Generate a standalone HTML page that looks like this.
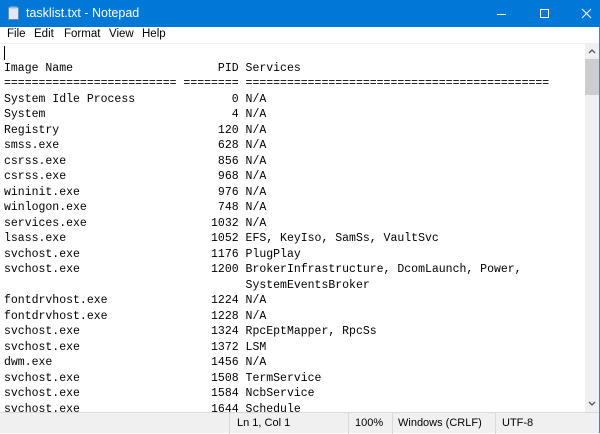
<!DOCTYPE html>
<html><head><style>
*{margin:0;padding:0;box-sizing:border-box}
body{width:600px;height:433px;overflow:hidden;background:#fff;font-family:"Liberation Sans",sans-serif;position:relative}
.title{position:absolute;left:0;top:0;width:600px;height:27px;background:#0078d7;color:#fff;font-size:12.5px}
.title span{position:absolute;left:26px;top:6px}
.menu{position:absolute;left:0;top:27px;width:600px;height:16px;font-size:11.5px;color:#000}
.menu span{position:absolute;top:1px}
.edit{position:absolute;left:0;top:43px;width:585px;height:369px;border-top:1px solid #f0f0f0;overflow:hidden}
pre{position:absolute;left:4px;top:1px;font-family:"Liberation Mono",monospace;font-size:11.5px;line-height:15.5px;color:#000}
.sb{position:absolute;left:585px;top:43px;width:14px;height:369px;background:#f0f0f0}
.thumb{position:absolute;left:0;top:16px;width:14px;height:36px;background:#cdcdcd}
.status{position:absolute;left:0;top:412px;width:600px;height:21px;background:#f0f0f0;border-top:1px solid #d9d9d9;font-size:11px;color:#000}
.status span{position:absolute;top:4px}
.sep{position:absolute;top:0;width:1px;height:21px;background:#d9d9d9}
.bl{position:absolute;left:599px;top:27px;width:1px;height:406px;background:#3b86d6}
</style></head><body>
<div class="title">
<svg style="position:absolute;left:7px;top:6px" width="14" height="15"><rect x="1.5" y="1.5" width="10" height="12" fill="#dfe9f3" stroke="#6a8cb0"/><rect x="3" y="0.5" width="7" height="2" fill="#9bb5d0"/></svg>
<span>tasklist.txt - Notepad</span>
<svg style="position:absolute;left:494px;top:8px" width="100" height="12" stroke="#fff" fill="none" stroke-width="1"><path d="M3 6.5h9"/><rect x="46.5" y="1.5" width="8" height="8"/><path d="M88 1l9 9M97 1l-9 9"/></svg>
</div>
<div class="menu"><span style="left:7px">File</span><span style="left:34px">Edit</span><span style="left:64px">Format</span><span style="left:109px">View</span><span style="left:142px">Help</span></div>
<div class="edit"><div style="position:absolute;left:4px;top:2px;width:1px;height:14px;background:#000"></div><pre>

Image Name                     PID Services
========================= ======== ============================================
System Idle Process              0 N/A
System                           4 N/A
Registry                       120 N/A
smss.exe                       628 N/A
csrss.exe                      856 N/A
csrss.exe                      968 N/A
wininit.exe                    976 N/A
winlogon.exe                   748 N/A
services.exe                  1032 N/A
lsass.exe                     1052 EFS, KeyIso, SamSs, VaultSvc
svchost.exe                   1176 PlugPlay
svchost.exe                   1200 BrokerInfrastructure, DcomLaunch, Power,
                                   SystemEventsBroker
fontdrvhost.exe               1224 N/A
fontdrvhost.exe               1228 N/A
svchost.exe                   1324 RpcEptMapper, RpcSs
svchost.exe                   1372 LSM
dwm.exe                       1456 N/A
svchost.exe                   1508 TermService
svchost.exe                   1584 NcbService
svchost.exe                   1644 Schedule
svchost.exe                   1700 N/A</pre></div>
<div class="sb"><div class="thumb"></div>
<svg style="position:absolute;left:3px;top:5px" width="8" height="6"><path d="M1 5l3-3 3 3" stroke="#555" fill="none" stroke-width="1.3"/></svg>
<svg style="position:absolute;left:3px;top:358px" width="8" height="6"><path d="M1 1l3 3 3-3" stroke="#555" fill="none" stroke-width="1.3"/></svg>
</div>
<div class="status">
<div class="sep" style="left:229px"></div><div class="sep" style="left:348px"></div><div class="sep" style="left:392px"></div><div class="sep" style="left:495px"></div>
<span style="left:237px">Ln 1, Col 1</span><span style="left:355px">100%</span><span style="left:398px">Windows (CRLF)</span><span style="left:502px">UTF-8</span>
</div>
<div class="bl"></div>
</body></html>
